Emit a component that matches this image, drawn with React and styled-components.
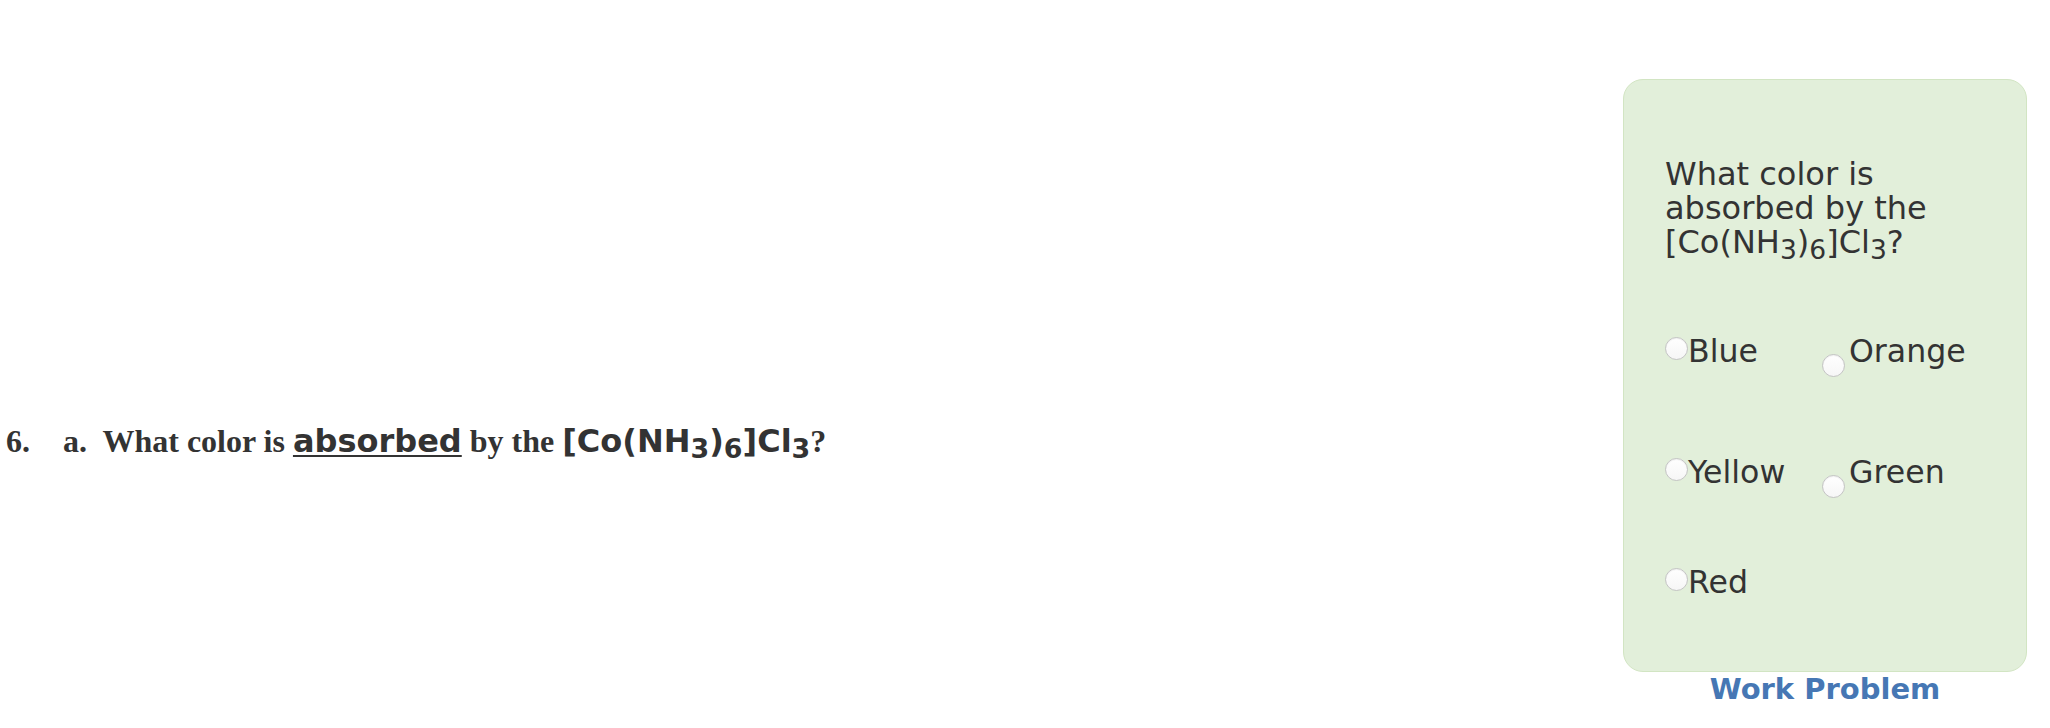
import React from 'react';
import styled, { createGlobalStyle } from 'styled-components';

const GlobalStyle = createGlobalStyle`
  html, body {
    margin: 0;
    padding: 0;
    background: #ffffff;
  }
  body {
    font-family: "DejaVu Sans", Verdana, sans-serif;
    color: #333333;
  }
`;

const Page = styled.div`
  display: flex;
  align-items: flex-start;
  width: 2050px;
  min-height: 728px;
`;

const QuestionArea = styled.div`
  flex: 1;
  padding: 421px 0 0 6px;
`;

const QuestionLine = styled.p`
  margin: 0;
  font-family: "Liberation Serif", "Times New Roman", serif;
  font-weight: bold;
  font-size: 32px;
  line-height: 40px;
  color: #333333;
  white-space: nowrap;
`;

const Number = styled.span`
  display: inline-block;
  width: 57px;
`;

const Sans = styled.span`
  font-family: "DejaVu Sans", Verdana, sans-serif;
  font-weight: bold;
  text-decoration: ${(p) => (p.$underline ? 'underline' : 'none')};
  text-decoration-thickness: 2px;
  text-underline-offset: 3px;
`;

const Sub = styled.sub`
  font-size: ${(p) => p.$size || '0.84em'};
  line-height: 0;
  vertical-align: -0.24em;
`;

const Side = styled.div`
  width: 404px;
  margin: 79px 23px 0 0;
  display: flex;
  flex-direction: column;
  align-items: center;
`;

const Panel = styled.div`
  box-sizing: border-box;
  width: 100%;
  padding: 77px 20px 72px 41px;
  background: #e2efda;
  border: 1px solid #d2e5c3;
  border-radius: 20px;
`;

const PanelQuestion = styled.div`
  font-size: 32px;
  line-height: 34px;
  color: #333333;
`;

const OptionGrid = styled.div`
  display: grid;
  grid-template-columns: 157px auto;
  grid-template-rows: 121px 110px auto;
  margin-top: 76px;
`;

const Option = styled.label`
  display: flex;
  align-items: flex-start;
  font-size: 31.6px;
  line-height: 33px;
  color: #333333;
  cursor: pointer;
`;

const Radio = styled.input.attrs({ type: 'radio' })`
  appearance: none;
  -webkit-appearance: none;
  box-sizing: border-box;
  flex: none;
  width: 23px;
  height: 23px;
  margin: ${(p) => (p.$low ? '19px 4px 0 0' : '2px 0 0 0')};
  border-radius: 50%;
  border: 1px solid #c4c4c4;
  background: linear-gradient(#ffffff, #f6f6f6);
  box-shadow: inset 0 1px 1px rgba(0, 0, 0, 0.06);
`;

const WorkLink = styled.a`
  font-weight: bold;
  font-size: 29px;
  line-height: 35px;
  color: #4677b4;
  text-decoration: none;
  cursor: pointer;
`;

const options = [
  { label: 'Blue', low: false },
  { label: 'Orange', low: true },
  { label: 'Yellow', low: false },
  { label: 'Green', low: true },
  { label: 'Red', low: false },
];

export default function App() {
  return (
    <>
      <GlobalStyle />
      <Page>
        <QuestionArea>
          <QuestionLine>
            <Number>6.</Number>
            a.{'\u00a0'} What color is <Sans $underline>absorbed</Sans> by the{' '}
            <Sans>
              [Co(NH<Sub>3</Sub>)<Sub>6</Sub>]Cl<Sub>3</Sub>
            </Sans>
            ?
          </QuestionLine>
        </QuestionArea>

        <Side>
          <Panel>
            <PanelQuestion>
              What color is
              <br />
              absorbed by the
              <br />
              [Co(NH<Sub $size="0.83em">3</Sub>)<Sub $size="0.83em">6</Sub>]Cl
              <Sub $size="0.83em">3</Sub>?
            </PanelQuestion>
            <OptionGrid>
              {options.map((o) => (
                <Option key={o.label}>
                  <Radio name="color" $low={o.low} />
                  {o.label}
                </Option>
              ))}
            </OptionGrid>
          </Panel>
          <WorkLink>Work Problem</WorkLink>
        </Side>
      </Page>
    </>
  );
}
